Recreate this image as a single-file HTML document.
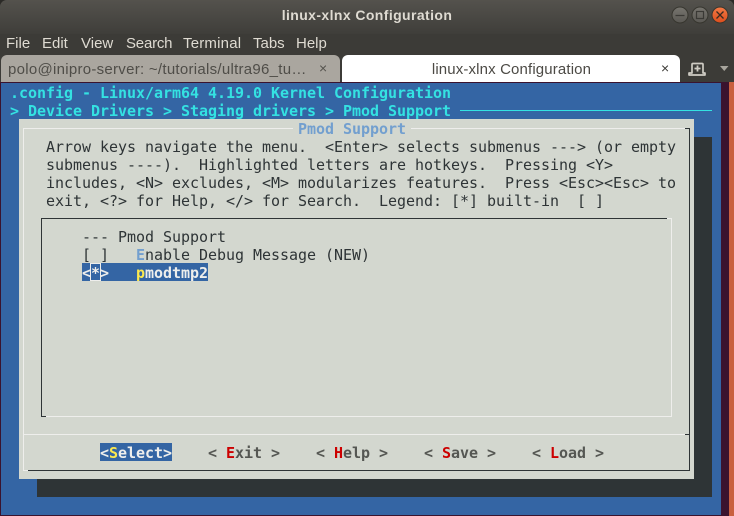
<!DOCTYPE html>
<html><head><meta charset="utf-8">
<style>
html,body{margin:0;padding:0;background:#2b2a27}
#w{position:relative;width:734px;height:516px;overflow:hidden;background:#3c3b37;border-radius:7px 7px 0 0;font-family:"Liberation Sans",sans-serif}
.a{position:absolute}
.t{position:absolute;margin-top:1px;white-space:pre;font:15px/18px "DejaVu Sans Mono","Liberation Mono",monospace;letter-spacing:-.03px;color:#2e3436}
.b{font-weight:bold}
.m{position:absolute;top:35px;font-size:15px;line-height:18px;color:#dfdbd2;white-space:pre}
.w{background:#eeeeec}
.d{background:#2e3436}
</style></head><body>
<div id="w">
<div class="a" style="left:0;top:0;width:734px;height:34px;background:linear-gradient(#54524d,#3f3e3a)"></div>
<div class="a b" style="left:0;top:6px;width:734px;text-align:center;font-size:14px;line-height:18px;color:#dfdbd2;font-weight:bold;letter-spacing:.4px">linux-xlnx Configuration</div>
<svg class="a" style="left:670px;top:0" width="64" height="32">
<defs><linearGradient id="g" x1="0" y1="0" x2="0" y2="1"><stop offset="0" stop-color="#77756f"/><stop offset="1" stop-color="#5a5853"/></linearGradient>
<linearGradient id="o" x1="0" y1="0" x2="0" y2="1"><stop offset="0" stop-color="#f47a45"/><stop offset="1" stop-color="#dc4d1c"/></linearGradient></defs>
<circle cx="10" cy="15" r="8" fill="url(#g)" stroke="#37362f"/>
<path d="M5.500 15.500h9" stroke="#3a3935" stroke-width="1.300"/>
<circle cx="30" cy="15" r="8" fill="url(#g)" stroke="#37362f"/>
<rect x="26.500" y="11.500" width="7" height="7" fill="none" stroke="#3a3935" stroke-width="1.200"/>
<circle cx="50" cy="15" r="8" fill="url(#o)" stroke="#37362f"/>
<path d="M46.500 11.500l7 7M53.500 11.500l-7 7" stroke="#3a2a20" stroke-width="1.300"/>
</svg>
<span class="m" style="left:6px">File</span>
<span class="m" style="left:42px">Edit</span>
<span class="m" style="left:81px">View</span>
<span class="m" style="left:126px;letter-spacing:-.2px">Search</span>
<span class="m" style="left:183px;letter-spacing:.2px">Terminal</span>
<span class="m" style="left:253px">Tabs</span>
<span class="m" style="left:296px">Help</span>

<div class="a" style="left:1px;top:55px;width:339px;height:27px;background:#aaa69f;border-radius:6px 6px 0 0"></div>
<div class="a" style="left:8px;top:61px;font-size:15px;line-height:18px;color:#4f4d48;white-space:pre;letter-spacing:.28px">polo@inipro-server: ~/tutorials/ultra96_tu…</div>
<div class="a" style="left:319px;top:59px;font-size:14px;line-height:18px;color:#55534e">×</div>
<div class="a" style="left:342px;top:55px;width:338px;height:27px;background:#fff;border-radius:6px 6px 0 0"></div>
<div class="a" style="left:342px;top:61px;width:339px;text-align:center;font-size:15px;line-height:18px;color:#4c4a45;letter-spacing:.14px">linux-xlnx Configuration</div>
<div class="a" style="left:661px;top:59px;font-size:14px;line-height:18px;color:#3c3b37">×</div>
<svg class="a" style="left:685px;top:60px" width="45" height="18">
<path d="M4 15V13H7V4.500Q7 3.500 8 3.500H17Q18 3.500 18 4.500V13H20V15H4Z" fill="none" stroke="#cfccc4" stroke-width="1.700" stroke-linejoin="round"/>
<path d="M12.500 5.500v6M9.500 8.500h6" stroke="#cfccc4" stroke-width="1.800"/>
<path d="M35 6h8.500l-4.250 5z" fill="#a8a59d"/>
</svg>

<div class="a" style="left:0;top:82px;width:734px;height:434px;background:#3a132e"></div>
<div class="a" style="left:729px;top:82px;width:5px;height:434px;background:#c9603f"></div>
<div class="a" style="left:1px;top:83px;width:720px;height:432px;background:#3465a4"></div>

<span class="t b" style="left:10px;top:83px;color:#34e2e2">.config - Linux/arm64 4.19.0 Kernel Configuration</span>
<span class="t b" style="left:10px;top:101px;color:#34e2e2">&gt; Device Drivers &gt; Staging drivers &gt; Pmod Support</span>
<div class="a" style="left:460px;top:110px;width:252px;height:1px;background:#34e2e2"></div>

<div class="a d" style="left:37px;top:137px;width:675px;height:360px"></div>
<div class="a" style="left:19px;top:119px;width:675px;height:360px;background:#d3d7cf"></div>

<div class="a w" style="left:23px;top:128px;width:1px;height:343px"></div>
<div class="a w" style="left:23px;top:128px;width:270px;height:1px"></div>
<div class="a w" style="left:411px;top:128px;width:274px;height:1px"></div>
<div class="a d" style="left:689px;top:128px;width:1px;height:343px"></div>
<div class="a d" style="left:685px;top:128px;width:5px;height:1px"></div>
<div class="a d" style="left:28px;top:470px;width:662px;height:1px"></div>
<div class="a w" style="left:23px;top:470px;width:5px;height:1px"></div>
<div class="a w" style="left:24px;top:434px;width:661px;height:1px"></div>
<div class="a d" style="left:685px;top:434px;width:5px;height:1px"></div>

<span class="t b" style="left:298px;top:119px;color:#729fcf">Pmod Support</span>
<span class="t" style="left:46px;top:137px">Arrow keys navigate the menu.  &lt;Enter&gt; selects submenus ---&gt; (or empty</span>
<span class="t" style="left:46px;top:155px">submenus ----).  Highlighted letters are hotkeys.  Pressing &lt;Y&gt;</span>
<span class="t" style="left:46px;top:173px">includes, &lt;N&gt; excludes, &lt;M&gt; modularizes features.  Press &lt;Esc&gt;&lt;Esc&gt; to</span>
<span class="t" style="left:46px;top:191px">exit, &lt;?&gt; for Help, &lt;/&gt; for Search.  Legend: [*] built-in  [ ]</span>

<div class="a d" style="left:41px;top:218px;width:1px;height:199px"></div>
<div class="a d" style="left:41px;top:218px;width:627px;height:1px"></div>
<div class="a d" style="left:41px;top:416px;width:5px;height:1px"></div>
<div class="a w" style="left:46px;top:416px;width:626px;height:1px"></div>
<div class="a w" style="left:671px;top:218px;width:1px;height:199px"></div>
<div class="a w" style="left:667px;top:218px;width:5px;height:1px"></div>

<span class="t" style="left:82px;top:227px">--- Pmod Support</span>
<span class="t" style="left:82px;top:245px">[ ]</span>
<span class="t b" style="left:136px;top:245px;color:#729fcf">E</span>
<span class="t" style="left:145px;top:245px">nable Debug Message (NEW)</span>

<div class="a" style="left:82px;top:263px;width:126px;height:18px;background:#3465a4"></div>
<span class="t b" style="left:82px;top:263px;color:#eeeeec">&lt;</span>
<div class="a" style="left:90px;top:263px;width:9px;height:16px;border:1px solid #eeeeec"></div>
<span class="t b" style="left:91px;top:263px;color:#eeeeec">*&gt;</span>
<span class="t b" style="left:136px;top:263px;color:#fce94f">p</span>
<span class="t b" style="left:145px;top:263px;color:#eeeeec">modtmp2</span>

<div class="a" style="left:100px;top:443px;width:72px;height:18px;background:#3465a4"></div>
<span class="t b" style="left:100px;top:443px;color:#eeeeec">&lt;</span>
<span class="t b" style="left:109px;top:443px;color:#fce94f">S</span>
<span class="t b" style="left:118px;top:443px;color:#eeeeec">elect&gt;</span>

<span class="t b" style="left:208px;top:443px;color:#555753">&lt; </span><span class="t b" style="left:226px;top:443px;color:#cc0000">E</span><span class="t b" style="left:235px;top:443px;color:#555753">xit &gt;</span>
<span class="t b" style="left:316px;top:443px;color:#555753">&lt; </span><span class="t b" style="left:334px;top:443px;color:#cc0000">H</span><span class="t b" style="left:343px;top:443px;color:#555753">elp &gt;</span>
<span class="t b" style="left:424px;top:443px;color:#555753">&lt; </span><span class="t b" style="left:442px;top:443px;color:#cc0000">S</span><span class="t b" style="left:451px;top:443px;color:#555753">ave &gt;</span>
<span class="t b" style="left:532px;top:443px;color:#555753">&lt; </span><span class="t b" style="left:550px;top:443px;color:#cc0000">L</span><span class="t b" style="left:559px;top:443px;color:#555753">oad &gt;</span>
</div>
</body></html>
